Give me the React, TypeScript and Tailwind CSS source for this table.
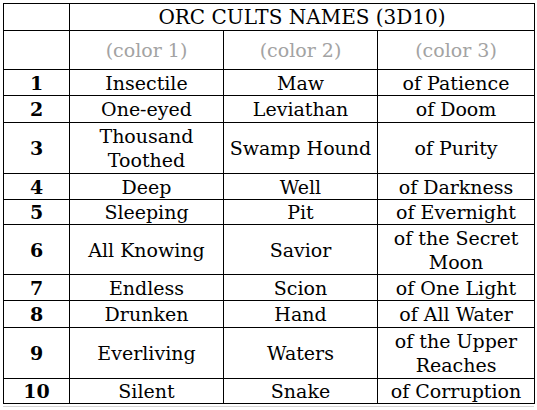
import type { ReactNode } from "react";

type Row = { n: number; a: ReactNode; b: ReactNode; c: ReactNode; h: string };

const rows: Row[] = [
  { n: 1, a: "Insectile", b: "Maw", c: "of Patience", h: "h-[26px]" },
  { n: 2, a: "One-eyed", b: "Leviathan", c: "of Doom", h: "h-[27px]" },
  { n: 3, a: <>Thousand<br />Toothed</>, b: "Swamp Hound", c: "of Purity", h: "h-[51px]" },
  { n: 4, a: "Deep", b: "Well", c: "of Darkness", h: "h-[26px]" },
  { n: 5, a: "Sleeping", b: "Pit", c: "of Evernight", h: "h-[25px]" },
  { n: 6, a: "All Knowing", b: "Savior", c: <>of the Secret<br />Moon</>, h: "h-[50px]" },
  { n: 7, a: "Endless", b: "Scion", c: "of One Light", h: "h-[26px]" },
  { n: 8, a: "Drunken", b: "Hand", c: "of All Water", h: "h-[27px]" },
  { n: 9, a: "Everliving", b: "Waters", c: <>of the Upper<br />Reaches</>, h: "h-[51px]" },
  { n: 10, a: "Silent", b: "Snake", c: "of Corruption", h: "h-[25px]" },
];

const cell = "border border-black p-0 text-center align-middle";

export default function App() {
  return (
    <div className="w-[537px] h-[410px] bg-white pt-[3px] pl-[3px] font-['DejaVu_Serif',serif] text-[19px] leading-[24px] text-black">
      <table className="w-[531px] table-fixed border-collapse">
        <colgroup>
          <col className="w-[66px]" />
          <col className="w-[154px]" />
          <col className="w-[154px]" />
          <col className="w-[157px]" />
        </colgroup>
        <tbody>
          <tr className="h-[27px]">
            <td className={cell}></td>
            <td className={`${cell} text-[20px]`} colSpan={3}>
              ORC CULTS NAMES (3D10)
            </td>
          </tr>
          <tr className="h-[39px] text-[#a3a3a3]">
            <td className={cell}></td>
            <td className={cell}>(color 1)</td>
            <td className={cell}>(color 2)</td>
            <td className={cell}>(color 3)</td>
          </tr>
          {rows.map((r) => (
            <tr key={r.n} className={r.h}>
              <td className={`${cell} font-bold`}>{r.n}</td>
              <td className={cell}>{r.a}</td>
              <td className={cell}>{r.b}</td>
              <td className={cell}>{r.c}</td>
            </tr>
          ))}
        </tbody>
      </table>
      <div className="mt-[2px] h-px w-[531px] bg-[#d4d4d4]" />
    </div>
  );
}
